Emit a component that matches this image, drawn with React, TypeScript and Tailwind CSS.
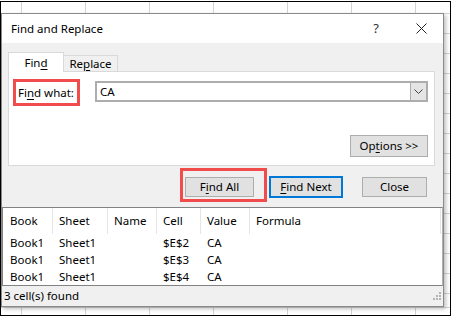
import React from "react";

const font = { fontFamily: '"Noto Sans", "Segoe UI", sans-serif' };

// spreadsheet gridlines behind the dialog
const colWidths = [21, 64, 64, 64, 74, 64, 64, 40];
const rowHeights = [12, 20, 20, 20, 20, 20, 20, 20, 20, 20, 20, 20, 20, 20, 20, 14, 20];

function Sheet() {
  return (
    <div
      className="grid h-full w-full overflow-hidden"
      style={{
        gridTemplateColumns: colWidths.map((w) => `${w}px`).join(" "),
        gridTemplateRows: rowHeights.map((h) => `${h}px`).join(" "),
      }}
    >
      {rowHeights.map((_, r) =>
        colWidths.map((_, c) => (
          <div key={`${r}-${c}`} className="border-b border-r border-[#d4d4d4]" />
        ))
      )}
    </div>
  );
}

function U({ children }: { children: React.ReactNode }) {
  return <span className="underline decoration-1 underline-offset-[2px]">{children}</span>;
}

const rows = [
  { book: "Book1", sheet: "Sheet1", name: "", cell: "$E$2", value: "CA" },
  { book: "Book1", sheet: "Sheet1", name: "", cell: "$E$3", value: "CA" },
  { book: "Book1", sheet: "Sheet1", name: "", cell: "$E$4", value: "CA" },
];

const cols = [
  { label: "Book", w: "w-[50px] pl-[7px]" },
  { label: "Sheet", w: "w-[55px] pl-[6px]" },
  { label: "Name", w: "w-[49px] pl-[6px]" },
  { label: "Cell", w: "w-[44px] pl-[6px]" },
  { label: "Value", w: "w-[49px] pl-[6px]" },
  { label: "Formula", w: "w-[191px] pl-[6px]" },
];

function Grip() {
  return (
    <svg width="9" height="9" viewBox="0 0 9 9" className="fill-[#b4b4b4]">
      <rect x="6" y="0" width="2" height="2" />
      <rect x="3" y="3" width="2" height="2" />
      <rect x="6" y="3" width="2" height="2" />
      <rect x="0" y="6" width="2" height="2" />
      <rect x="3" y="6" width="2" height="2" />
      <rect x="6" y="6" width="2" height="2" />
    </svg>
  );
}

export default function App() {
  return (
    <div className="relative h-[317px] w-[453px] bg-white pb-[1px] pr-[2px] pt-[1px]" style={font}>
      <div className="h-full w-full border border-black">
        <Sheet />
      </div>

      {/* dialog window */}
      <div className="absolute left-[1px] top-[13px] flex h-[294px] w-[443px] flex-col border border-[#8a8a8a] bg-[#f0f0f0] text-[11.5px] text-black shadow-[2px_2px_4px_rgba(0,0,0,0.25)]">
        {/* title bar */}
        <div className="flex h-[29px] items-center bg-white pl-[9px]">
          <span className="text-[11.5px]">Find and Replace</span>
          <span className="ml-auto mr-[37px] text-[13px] leading-none text-[#333]">?</span>
          <svg width="11" height="11" viewBox="0 0 11 11" className="mr-[16px] stroke-[#222]">
            <path d="M0.5 0.5 L10.5 10.5 M10.5 0.5 L0.5 10.5" strokeWidth="1" />
          </svg>
        </div>

        {/* tabs */}
        <div className="flex items-end pl-[6px] pt-[9px]">
          <div className="relative z-10 -mb-[1px] flex h-[20px] w-[56px] items-center justify-center border border-b-0 border-[#d9d9d9] bg-white pt-[1px]">
            Fin<U>d</U>
          </div>
          <div className="flex h-[16px] w-[54px] items-center justify-center border border-b-0 border-l-0 border-[#d9d9d9] bg-[#f0f0f0]">
            Re<U>p</U>lace
          </div>
        </div>

        {/* find panel */}
        <div className="ml-[6px] flex h-[95px] w-[427px] flex-col border border-[#d9d9d9] bg-white">
          <div className="flex items-start pl-[4px] pt-[7px]">
            <div className="flex h-[27px] w-[67px] items-center border-[3px] border-[#f24b4b] pl-[2px]">
              Fi<U>n</U>d what:
            </div>
            <div className="ml-[15px] mt-[2px] flex h-[21px] w-[333px] items-stretch border-2 border-[#adadad] bg-white">
              <span className="flex flex-1 items-center pl-[3px]">CA</span>
              <span className="flex w-[16px] items-center justify-center border-l border-[#adadad] bg-[#e5e5e5]">
                <svg width="9" height="5" viewBox="0 0 9 5" className="stroke-[#444]" fill="none">
                  <path d="M0.5 0.5 L4.5 4.5 L8.5 0.5" strokeWidth="1" />
                </svg>
              </span>
            </div>
          </div>
          <div className="mt-auto mb-[8px] mr-[6px] flex justify-end">
            <button className="flex h-[22px] w-[78px] items-center justify-center border border-[#adadad] bg-[#e1e1e1]">
              Op<U>t</U>ions &gt;&gt;
            </button>
          </div>
        </div>

        {/* action buttons */}
        <div className="mt-[2px] flex h-[34px] items-start pl-[178px]">
          <div className="h-[34px] w-[87px] border-[3px] border-[#f24b4b] pb-[2px] pl-[2px] pt-[6px]">
            <button className="flex h-[20px] w-[69px] items-center justify-center border border-[#adadad] bg-[#e1e1e1]">
              F<U>i</U>nd All
            </button>
          </div>
          <button className="ml-[2px] mt-[8px] flex h-[22px] w-[74px] items-center justify-center border-2 border-[#0078d7] bg-[#e1e1e1]">
            <U>F</U>ind Next
          </button>
          <button className="ml-[19px] mt-[9px] flex h-[20px] w-[65px] items-center justify-center border border-[#adadad] bg-[#e1e1e1]">
            Close
          </button>
        </div>

        {/* results list */}
        <div className="mt-[5px] h-[79px] border border-[#828282] border-r-[#b0b0b0] bg-white">
          <div className="flex h-[26px]">
            {cols.map((c) => (
              <div key={c.label} className={`flex items-center border-r border-[#e5e5e5] ${c.w}`}>
                {c.label}
              </div>
            ))}
          </div>
          {rows.map((r) => (
            <div key={r.cell} className="flex h-[17px] items-center">
              <div className={cols[0].w}>{r.book}</div>
              <div className={cols[1].w}>{r.sheet}</div>
              <div className={cols[2].w}>{r.name}</div>
              <div className={cols[3].w}>{r.cell}</div>
              <div className={cols[4].w}>{r.value}</div>
            </div>
          ))}
        </div>

        {/* status bar */}
        <div className="flex flex-1 items-center pl-[2px] pr-[1px]">
          <span>3 cell(s) found</span>
          <span className="ml-auto mt-[6px] self-start">
            <Grip />
          </span>
        </div>
      </div>
    </div>
  );
}
